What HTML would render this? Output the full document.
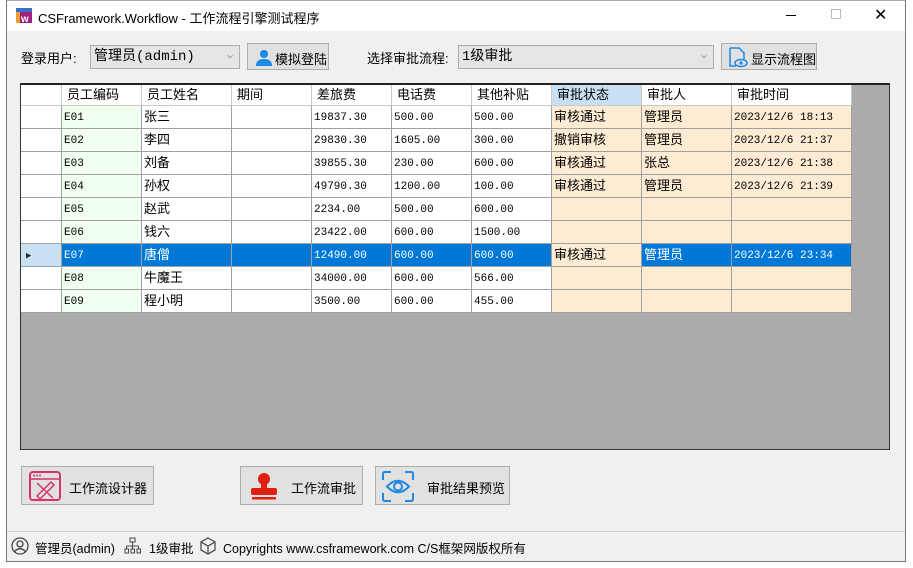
<!DOCTYPE html>
<html><head><meta charset="utf-8"><style>
*{margin:0;padding:0;box-sizing:border-box}
body{width:913px;height:568px;background:#fff;font-family:"Liberation Sans","Noto Sans CJK SC",sans-serif;font-size:12px;color:#000;position:relative;overflow:hidden}
.abs{position:absolute;white-space:nowrap}
.win{position:absolute;left:6px;top:0;width:900px;height:562px;background:#f0f0f0;border:1px solid #777;border-top:1px solid #aaa}
.title{position:absolute;left:7px;top:1px;width:898px;height:30px;background:#fff}
.combo{position:absolute;height:24px;background:#e5e5e5;border:1px solid #adadad;font-family:"Liberation Mono","Noto Sans CJK SC",monospace;font-size:14px;line-height:22px;padding-left:3px;white-space:nowrap}
.btn{position:absolute;background:#e1e1e1;border:1px solid #adadad}
.grid{position:absolute;left:20px;top:83px;width:870px;height:367px;background:#ababab;border:1px solid #333;border-top:2px solid #222;overflow:hidden}
table{border-collapse:collapse;position:absolute;left:-1px;top:0;table-layout:fixed}
td{border:1px solid #a0a0a0;height:23px;vertical-align:top;font-family:"Liberation Mono",monospace;font-size:11px;line-height:14px;padding:5px 0 0 2px;white-space:nowrap;overflow:hidden;background:#fff}
td.c{font-family:"Liberation Sans","Noto Sans CJK SC",sans-serif;font-size:13px;line-height:18px;padding-top:2px}
tr.h td{height:20px;line-height:18px;padding-top:1px;font-family:"Liberation Sans","Noto Sans CJK SC",sans-serif;font-size:13px;padding-left:5px;border-top:none;border-color:#c8c8c8}
td.g{background:#f0fff0}
td.p{background:#fdebd3}
tr.sel td{background:#0078d7;color:#fff}
tr.sel td.p{background:#fdebd3;color:#000}
tr.sel td.rh{background:#c8e0f4;color:#222}
</style></head><body>
<div class="win"></div>
<div class="title"></div>
<svg class="abs" style="left:16px;top:8px" width="16" height="15"><rect x="0" y="0" width="16" height="5" fill="#3b6fc4"/><rect x="0" y="4" width="4" height="11" fill="#e8a035"/><rect x="4" y="4" width="12" height="11" fill="#a0207e"/><text x="5" y="14" font-size="10" fill="#fff" font-family="Liberation Sans" font-weight="bold">w</text></svg>
<div class="abs" style="left:38px;top:8px;font-size:13px">CSFramework.Workflow - 工作流程引擎测试程序</div>
<div class="abs" style="left:786px;top:15px;width:10px;height:1px;background:#000"></div>
<div class="abs" style="left:831px;top:9px;width:10px;height:10px;border:1px solid #bbb"></div>
<div class="abs" style="left:874px;top:5px;font-size:16px">✕</div>

<div class="abs" style="left:21px;top:48px;font-size:13px">登录用户:</div>
<div class="combo" style="left:90px;top:45px;width:150px">管理员(admin)<span class="abs" style="right:6px;top:0;font-size:10px;color:#666">⌵</span></div>
<div class="btn" style="left:247px;top:43px;width:82px;height:27px">
 <svg class="abs" style="left:7px;top:5px" width="18" height="17"><circle cx="9" cy="5" r="4" fill="#1e88e5"/><path d="M1 17 Q1 10 9 10 Q17 10 17 17Z" fill="#1e88e5"/></svg>
 <div class="abs" style="left:27px;top:5px;font-size:13px">模拟登陆</div></div>
<div class="abs" style="left:367px;top:48px;font-size:13px">选择审批流程:</div>
<div class="combo" style="left:458px;top:45px;width:256px">1级审批<span class="abs" style="right:6px;top:0;font-size:10px;color:#666">⌵</span></div>
<div class="btn" style="left:721px;top:43px;width:96px;height:27px">
 <svg class="abs" style="left:6px;top:3px" width="20" height="21"><path d="M2 1h9l5 5v6M2 1v18h6" fill="none" stroke="#1e88e5" stroke-width="1.5"/><ellipse cx="13" cy="16" rx="6" ry="3.5" fill="none" stroke="#1e88e5" stroke-width="1.5"/><circle cx="13" cy="16" r="1.6" fill="#1e88e5"/></svg>
 <div class="abs" style="left:29px;top:5px;font-size:13px">显示流程图</div></div>

<div class="grid"><table>
 <colgroup><col style="width:41px"><col style="width:80px"><col style="width:90px"><col style="width:80px"><col style="width:80px"><col style="width:80px"><col style="width:80px"><col style="width:90px"><col style="width:90px"><col style="width:120px"></colgroup>
 <tr class="h"><td class="rh"></td><td>员工编码</td><td>员工姓名</td><td>期间</td><td>差旅费</td><td>电话费</td><td>其他补贴</td><td style="background:#c8e0f4">审批状态</td><td>审批人</td><td>审批时间</td></tr>
 <tr><td class="rh"></td><td class="g">E01</td><td class="c">张三</td><td></td><td>19837.30</td><td>500.00</td><td>500.00</td><td class="p c">审核通过</td><td class="p c">管理员</td><td class="p">2023/12/6 18:13</td></tr>
 <tr><td class="rh"></td><td class="g">E02</td><td class="c">李四</td><td></td><td>29830.30</td><td>1605.00</td><td>300.00</td><td class="p c">撤销审核</td><td class="p c">管理员</td><td class="p">2023/12/6 21:37</td></tr>
 <tr><td class="rh"></td><td class="g">E03</td><td class="c">刘备</td><td></td><td>39855.30</td><td>230.00</td><td>600.00</td><td class="p c">审核通过</td><td class="p c">张总</td><td class="p">2023/12/6 21:38</td></tr>
 <tr><td class="rh"></td><td class="g">E04</td><td class="c">孙权</td><td></td><td>49790.30</td><td>1200.00</td><td>100.00</td><td class="p c">审核通过</td><td class="p c">管理员</td><td class="p">2023/12/6 21:39</td></tr>
 <tr><td class="rh"></td><td class="g">E05</td><td class="c">赵武</td><td></td><td>2234.00</td><td>500.00</td><td>600.00</td><td class="p"></td><td class="p"></td><td class="p"></td></tr>
 <tr><td class="rh"></td><td class="g">E06</td><td class="c">钱六</td><td></td><td>23422.00</td><td>600.00</td><td>1500.00</td><td class="p"></td><td class="p"></td><td class="p"></td></tr>
 <tr class="sel"><td class="rh" style="font-size:9px;padding-left:5px">▶</td><td>E07</td><td class="c">唐僧</td><td></td><td>12490.00</td><td>600.00</td><td>600.00</td><td class="p c">审核通过</td><td class="c">管理员</td><td>2023/12/6 23:34</td></tr>
 <tr><td class="rh"></td><td class="g">E08</td><td class="c">牛魔王</td><td></td><td>34000.00</td><td>600.00</td><td>566.00</td><td class="p"></td><td class="p"></td><td class="p"></td></tr>
 <tr><td class="rh"></td><td class="g">E09</td><td class="c">程小明</td><td></td><td>3500.00</td><td>600.00</td><td>455.00</td><td class="p"></td><td class="p"></td><td class="p"></td></tr>
</table></div>

<div class="btn" style="left:21px;top:466px;width:133px;height:39px">
 <svg class="abs" style="left:7px;top:4px" width="32" height="30"><rect x="1" y="1" width="30" height="28" rx="3" fill="none" stroke="#d6336c" stroke-width="2"/><line x1="1" y1="8" x2="31" y2="8" stroke="#d6336c" stroke-width="1.5"/><circle cx="5" cy="4.5" r="1" fill="#d6336c"/><circle cx="8" cy="4.5" r="1" fill="#d6336c"/><circle cx="11" cy="4.5" r="1" fill="#d6336c"/><path d="M8 25 L22 11 L25 14 L11 28Z M8 12 L24 27" fill="none" stroke="#d6336c" stroke-width="1.5"/></svg>
 <div class="abs" style="left:47px;top:11px;font-size:13px">工作流设计器</div></div>
<div class="btn" style="left:240px;top:466px;width:123px;height:39px">
 <svg class="abs" style="left:8px;top:5px" width="30" height="29"><circle cx="15" cy="7" r="6" fill="#e02010"/><rect x="12" y="11" width="6" height="6" fill="#e02010"/><rect x="2" y="16" width="26" height="7" rx="2" fill="#e02010"/><rect x="3" y="25" width="24" height="2.5" fill="#e02010"/></svg>
 <div class="abs" style="left:50px;top:11px;font-size:13px">工作流审批</div></div>
<div class="btn" style="left:375px;top:466px;width:135px;height:39px">
 <svg class="abs" style="left:6px;top:4px" width="32" height="31"><path d="M1 9V3Q1 1 3 1H9M23 1H29Q31 1 31 3V9M31 22V28Q31 30 29 30H23M9 30H3Q1 30 1 28V22" fill="none" stroke="#1e88e5" stroke-width="2"/><path d="M5 15.5Q16 4 27 15.5Q16 27 5 15.5Z" fill="none" stroke="#1e88e5" stroke-width="2"/><circle cx="16" cy="15.5" r="4" fill="none" stroke="#1e88e5" stroke-width="2"/></svg>
 <div class="abs" style="left:51px;top:11px;font-size:13px">审批结果预览</div></div>

<div class="abs" style="left:7px;top:531px;width:898px;height:1px;background:#d0d0d0"></div>
<svg class="abs" style="left:11px;top:537px" width="18" height="18"><circle cx="9" cy="9" r="8" fill="none" stroke="#444" stroke-width="1.3"/><circle cx="9" cy="7" r="3" fill="none" stroke="#444" stroke-width="1.3"/><path d="M3.5 14.5Q9 9 14.5 14.5" fill="none" stroke="#444" stroke-width="1.3"/></svg>
<div class="abs" style="left:35px;top:538px;font-size:12.5px">管理员(admin)</div>
<svg class="abs" style="left:124px;top:537px" width="18" height="18"><rect x="6" y="1" width="5" height="4" fill="none" stroke="#444"/><path d="M8.5 5V9M2.5 9H14.5M2.5 9V12M8.5 9V12M14.5 9V12" fill="none" stroke="#444"/><rect x="1" y="12" width="3.5" height="4" fill="none" stroke="#444"/><rect x="7" y="12" width="3.5" height="4" fill="none" stroke="#444"/><rect x="13" y="12" width="3.5" height="4" fill="none" stroke="#444"/></svg>
<div class="abs" style="left:149px;top:538px;font-size:12.5px">1级审批</div>
<svg class="abs" style="left:199px;top:537px" width="18" height="18"><path d="M9 1L16 5V13L9 17L2 13V5Z M2 5L9 9L16 5 M9 9V17" fill="none" stroke="#444" stroke-width="1.2"/></svg>
<div class="abs" style="left:223px;top:538px;font-size:12.5px">Copyrights www.csframework.com C/S框架网版权所有</div>
</body></html>
